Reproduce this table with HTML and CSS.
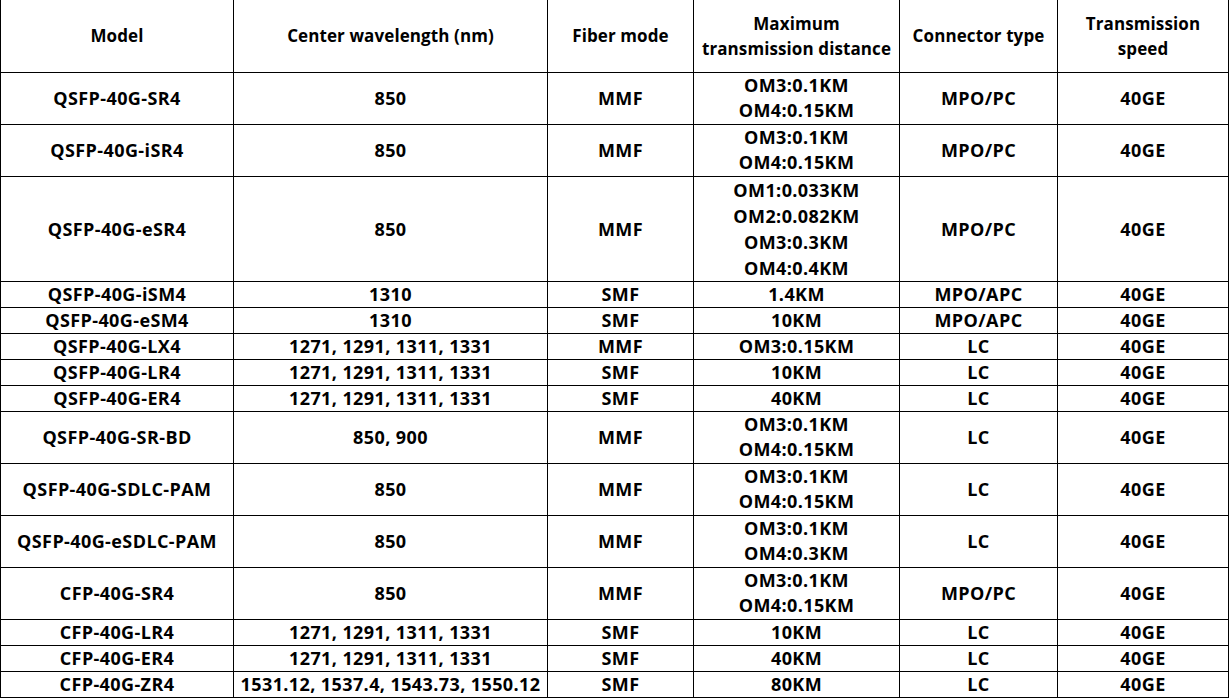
FILE: index.html
```
<!DOCTYPE html>
<html lang="en">
<head>
<meta charset="utf-8">
<title>40G optical modules</title>
<link rel="stylesheet" href="styles.css">
</head>
<body>
<table class="spec">
  <colgroup>
    <col class="c-model">
    <col class="c-wave">
    <col class="c-mode">
    <col class="c-dist">
    <col class="c-conn">
    <col class="c-speed">
  </colgroup>
  <thead>
    <tr class="head">
      <th>Model</th>
      <th>Center wavelength (nm)</th>
      <th>Fiber mode</th>
      <th>Maximum<br>transmission distance</th>
      <th>Connector type</th>
      <th>Transmission<br>speed</th>
    </tr>
  </thead>
  <tbody>
    <tr class="r2"><td>QSFP-40G-SR4</td><td>850</td><td>MMF</td><td>OM3:0.1KM<br>OM4:0.15KM</td><td>MPO/PC</td><td>40GE</td></tr>
    <tr class="r2"><td>QSFP-40G-iSR4</td><td>850</td><td>MMF</td><td>OM3:0.1KM<br>OM4:0.15KM</td><td>MPO/PC</td><td>40GE</td></tr>
    <tr class="r4"><td>QSFP-40G-eSR4</td><td>850</td><td>MMF</td><td>OM1:0.033KM<br>OM2:0.082KM<br>OM3:0.3KM<br>OM4:0.4KM</td><td>MPO/PC</td><td>40GE</td></tr>
    <tr class="r1"><td>QSFP-40G-iSM4</td><td>1310</td><td>SMF</td><td>1.4KM</td><td>MPO/APC</td><td>40GE</td></tr>
    <tr class="r1"><td>QSFP-40G-eSM4</td><td>1310</td><td>SMF</td><td>10KM</td><td>MPO/APC</td><td>40GE</td></tr>
    <tr class="r1"><td>QSFP-40G-LX4</td><td>1271, 1291, 1311, 1331</td><td>MMF</td><td>OM3:0.15KM</td><td>LC</td><td>40GE</td></tr>
    <tr class="r1"><td>QSFP-40G-LR4</td><td>1271, 1291, 1311, 1331</td><td>SMF</td><td>10KM</td><td>LC</td><td>40GE</td></tr>
    <tr class="r1"><td>QSFP-40G-ER4</td><td>1271, 1291, 1311, 1331</td><td>SMF</td><td>40KM</td><td>LC</td><td>40GE</td></tr>
    <tr class="r2"><td>QSFP-40G-SR-BD</td><td>850, 900</td><td>MMF</td><td>OM3:0.1KM<br>OM4:0.15KM</td><td>LC</td><td>40GE</td></tr>
    <tr class="r2"><td>QSFP-40G-SDLC-PAM</td><td>850</td><td>MMF</td><td>OM3:0.1KM<br>OM4:0.15KM</td><td>LC</td><td>40GE</td></tr>
    <tr class="r2"><td>QSFP-40G-eSDLC-PAM</td><td>850</td><td>MMF</td><td>OM3:0.1KM<br>OM4:0.3KM</td><td>LC</td><td>40GE</td></tr>
    <tr class="r2"><td>CFP-40G-SR4</td><td>850</td><td>MMF</td><td>OM3:0.1KM<br>OM4:0.15KM</td><td>MPO/PC</td><td>40GE</td></tr>
    <tr class="r1"><td>CFP-40G-LR4</td><td>1271, 1291, 1311, 1331</td><td>SMF</td><td>10KM</td><td>LC</td><td>40GE</td></tr>
    <tr class="r1"><td>CFP-40G-ER4</td><td>1271, 1291, 1311, 1331</td><td>SMF</td><td>40KM</td><td>LC</td><td>40GE</td></tr>
    <tr class="r1"><td>CFP-40G-ZR4</td><td>1531.12, 1537.4, 1543.73, 1550.12</td><td>SMF</td><td>80KM</td><td>LC</td><td>40GE</td></tr>
  </tbody>
</table>
</body>
</html>
```

FILE: styles.css
```
html, body {
  margin: 0;
  padding: 0;
  background: #ffffff;
}

.spec {
  border-collapse: collapse;
  table-layout: fixed;
  width: 1229px;
  font-family: "Open Sans", "Noto Sans", "Liberation Sans", sans-serif;
  font-weight: 700;
  color: #000000;
  border-left: 1px solid #000;
  border-right: 1px solid #000;
  border-bottom: 1px solid #000;
}

.c-model { width: 233px; }
.c-wave { width: 314px; }
.c-mode { width: 146px; }
.c-dist { width: 206px; }
.c-conn { width: 158px; }
.c-speed { width: 171px; }

.spec th,
.spec td {
  border: 1px solid #000;
  padding: 0;
  text-align: center;
  vertical-align: middle;
  font-weight: 700;
  white-space: nowrap;
}

.spec th {
  border-top: 0;
  font-size: 17px;
  letter-spacing: 0.1px;
  line-height: 25px;
}

.spec td {
  font-size: 18px;
  letter-spacing: 0.4px;
  line-height: 25px;
}

.head { height: 72px; }
.r1 td { height: 25px; }
.r2 td { height: 51px; }
.r4 td { height: 103px; line-height: 26px; }
```
